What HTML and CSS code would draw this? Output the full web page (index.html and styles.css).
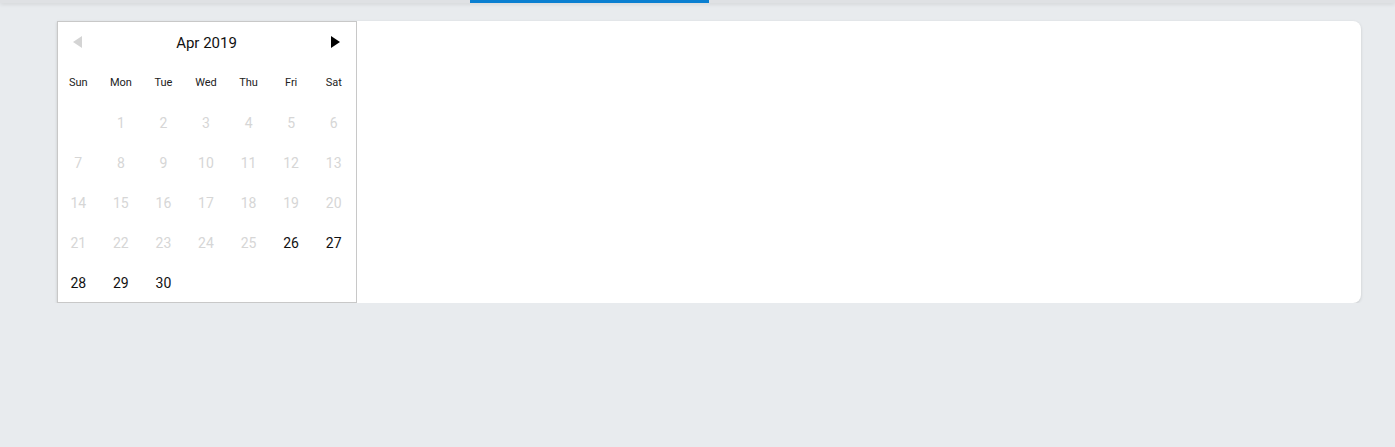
FILE: index.html
```html
<!DOCTYPE html>
<html lang="en">
<head>
    <meta charset="UTF-8">
    <title>Calendar</title>
    <link rel="stylesheet" href="styles.css">
</head>
<body>
    <div class="topbar">
        <div class="tab-active"></div>
    </div>

    <div class="content">
        <div class="card">
            <div class="calendar">
                <div class="cal-header">
                    <span class="nav-prev disabled"></span>
                    <span class="cal-title">Apr 2019</span>
                    <span class="nav-next"></span>
                </div>
                <div class="cal-grid">
                    <div class="weekday">Sun</div>
                    <div class="weekday">Mon</div>
                    <div class="weekday">Tue</div>
                    <div class="weekday">Wed</div>
                    <div class="weekday">Thu</div>
                    <div class="weekday">Fri</div>
                    <div class="weekday">Sat</div>

                    <div class="day"></div>
                    <div class="day off">1</div>
                    <div class="day off">2</div>
                    <div class="day off">3</div>
                    <div class="day off">4</div>
                    <div class="day off">5</div>
                    <div class="day off">6</div>

                    <div class="day off">7</div>
                    <div class="day off">8</div>
                    <div class="day off">9</div>
                    <div class="day off">10</div>
                    <div class="day off">11</div>
                    <div class="day off">12</div>
                    <div class="day off">13</div>

                    <div class="day off">14</div>
                    <div class="day off">15</div>
                    <div class="day off">16</div>
                    <div class="day off">17</div>
                    <div class="day off">18</div>
                    <div class="day off">19</div>
                    <div class="day off">20</div>

                    <div class="day off">21</div>
                    <div class="day off">22</div>
                    <div class="day off">23</div>
                    <div class="day off">24</div>
                    <div class="day off">25</div>
                    <div class="day">26</div>
                    <div class="day">27</div>

                    <div class="day">28</div>
                    <div class="day">29</div>
                    <div class="day">30</div>
                </div>
            </div>
        </div>
    </div>
</body>
</html>
```

FILE: styles.css
```css
body {
    margin: 0;
    background-color: #e8ebee;
    font-family: Roboto, "Liberation Sans", Arial, sans-serif;
    color: #000;
}

/* bandeau du haut */
.topbar {
    height: 3px;
    background-color: #dfe1e4;
    box-shadow: 0 1px 4px rgba(0,0,0,0.12);
    position: relative;
}
.tab-active {
    margin-left: 470px;
    width: 239px;
    height: 3px;
    background-color: #0a7fd1;
}

.content {
    padding: 18px 34px 0 57px;
}
.card {
    background-color: white;
    border-radius: 0 8px 8px 0;
    box-shadow: 0 1px 3px rgba(0,0,0,0.15);
    height: 282px;
    width: 1304px;
}

/* calendrier */
.calendar {
    width: 298px;
    border: 1px solid #c8c8c8;
    background-color: white;
}
.cal-header {
    height: 40px;
    display: flex;
    align-items: center;
    justify-content: space-between;
    padding: 0 16px 0 15px;
}
.cal-title {
    font-size: 15px;
    color: #111;
    padding-top: 1px;
}
.nav-prev, .nav-next {
    width: 0;
    height: 0;
    border-top: 6px solid transparent;
    border-bottom: 6px solid transparent;
}
.nav-prev {
    border-right: 9px solid #000;
}
.nav-next {
    border-left: 9px solid #000;
}
.nav-prev.disabled {
    border-right-color: #d4d4d4;
}
.cal-grid {
    display: grid;
    grid-template-columns: repeat(7, 1fr);
    grid-auto-rows: 40px;
    width: 298px;
    margin-left: -1px;
}
.weekday, .day {
    display: flex;
    align-items: center;
    justify-content: center;
}
.weekday {
    font-size: 11px;
    color: #222;
}
.day {
    font-size: 14px;
    color: #111;
    padding-top: 2px;
}
.day.off {
    color: #d6d6d6;
}
```
